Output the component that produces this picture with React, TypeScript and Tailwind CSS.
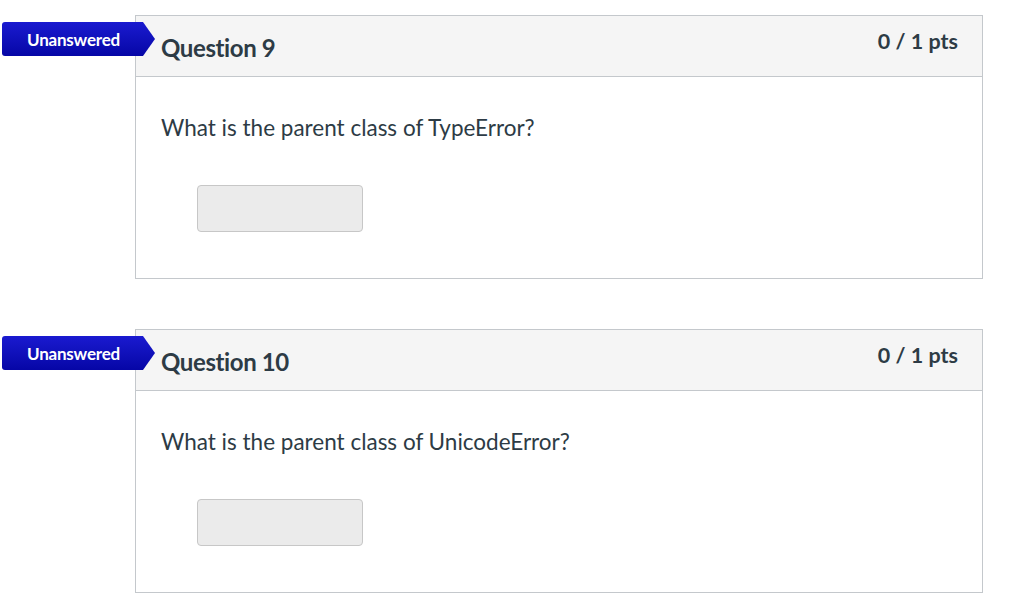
const questions = [
  { number: 9, text: "What is the parent class of TypeError?" },
  { number: 10, text: "What is the parent class of UnicodeError?" },
]

function Badge() {
  return (
    <div className="absolute left-[-134px] top-[6px] flex h-[34px] w-[153px] items-center bg-gradient-to-b from-[#1a1ad0] to-[#0606a6] pl-[25px] rounded-l-[3px] [clip-path:polygon(0_0,141px_0,153px_50%,141px_100%,0_100%)]">
      <span className="text-[17px] font-bold leading-none tracking-[-0.2px] text-white">Unanswered</span>
    </div>
  )
}

function QuestionCard({ number, text }: { number: number; text: string }) {
  return (
    <div className="relative w-[848px] border border-[#c4c8cc]">
      <Badge />
      {/* Header */}
      <div className="flex h-[61px] justify-between border-b border-[#c4c8cc] bg-[#f5f5f5] pl-[25px] pr-[24px]">
        <h2 className="pt-[20px] text-[24px] font-bold leading-none tracking-[-0.4px] text-[#2d3b45]">
          Question {number}
        </h2>
        <div className="pt-[15px] text-[21.5px] font-bold leading-none text-[#2d3b45]">0 / 1 pts</div>
      </div>
      {/* Body */}
      <div className="h-[201px] pl-[25px] pt-[40px]">
        <p className="text-[22.5px] leading-none text-[#2d3b45]">{text}</p>
        <div className="ml-[36px] mt-[45px] h-[47px] w-[166px] rounded-[4px] border border-[#c7c7c7] bg-[#ebebeb]" />
      </div>
    </div>
  )
}

export default function App() {
  return (
    <div className="min-h-[604px] w-[1024px] bg-white pt-[15px] pl-[135px] font-['Lato','Liberation_Sans',sans-serif]">
      <div className="flex flex-col gap-[50px]">
        {questions.map((q) => (
          <QuestionCard key={q.number} number={q.number} text={q.text} />
        ))}
      </div>
    </div>
  )
}
